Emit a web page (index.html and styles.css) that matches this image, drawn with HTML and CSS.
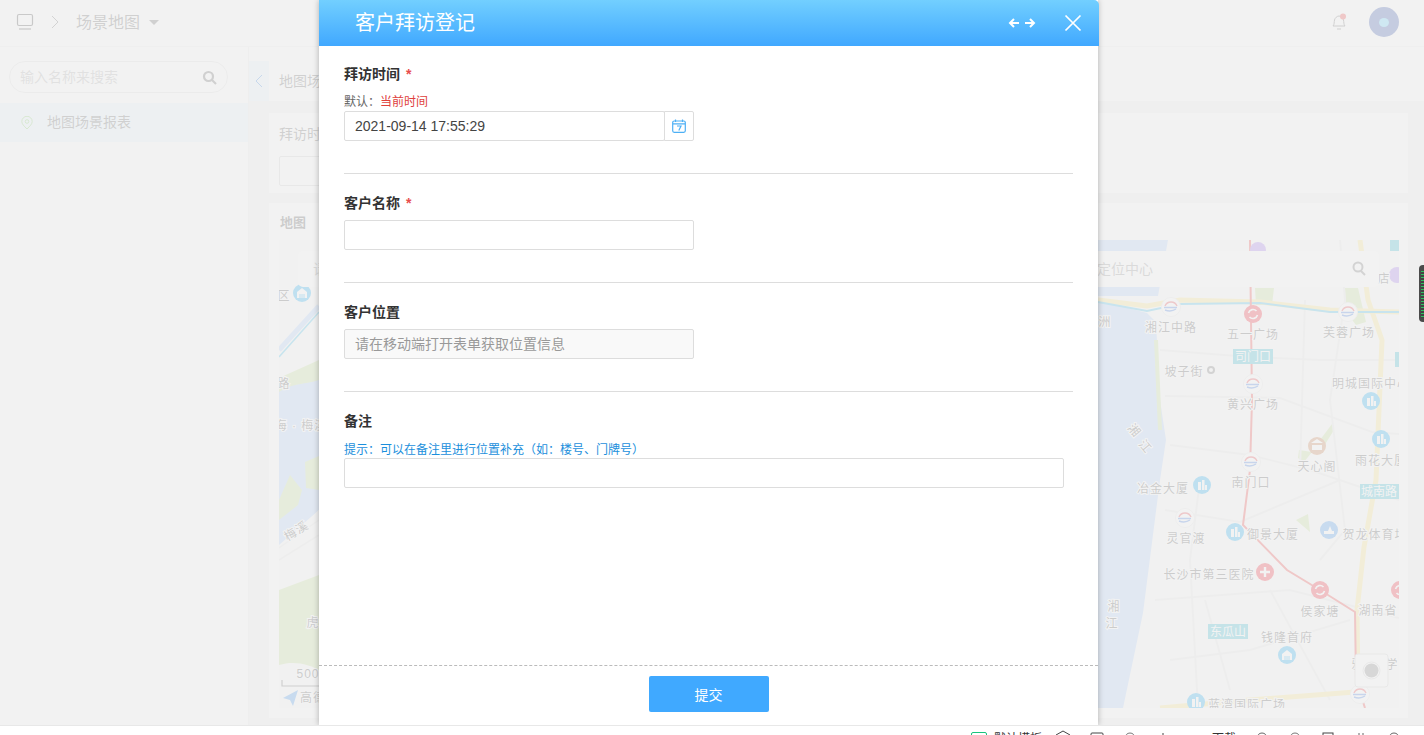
FILE: index.html
```html
<!DOCTYPE html>
<html lang="zh-CN">
<head>
    <meta charset="UTF-8">
    <title>客户拜访登记</title>
    <link rel="stylesheet" href="styles.css">
</head>
<body>
    <div class="app">
        <!-- top bar -->
        <header class="topbar">
            <svg class="ico-monitor" width="18" height="18" viewBox="0 0 18 18" fill="none" stroke="#333" stroke-width="1.2"><rect x="1.5" y="1.5" width="15" height="11" rx="1.5"/><path d="M3 16h12"/></svg>
            <svg class="ico-chevron" width="8" height="14" viewBox="0 0 8 14" fill="none" stroke="#666" stroke-width="1"><path d="M1 1l6 6-6 6"/></svg>
            <span class="app-name">场景地图</span>
            <span class="caret"></span>
            <div class="topbar-right">
                <svg width="16" height="18" viewBox="0 0 16 18" fill="none" stroke="#555" stroke-width="1"><path d="M2 13c1.500-1.500 1-4 1.500-6S6 3 8 3s4 2 4.500 4 0 4.500 1.500 6z"/><path d="M6 16h4"/><circle cx="12" cy="3.500" r="3" fill="#f02d2d" stroke="none"/></svg>
                <span class="avatar"><span class="avatar-dot"></span></span>
            </div>
        </header>

        <div class="workspace">
            <!-- sidebar -->
            <aside class="sidebar">
                <div class="side-search">
                    <span>输入名称来搜索</span>
                    <svg width="15" height="15" viewBox="0 0 15 15" fill="none" stroke="#555" stroke-width="2.200"><circle cx="6.500" cy="6.500" r="4.500"/><path d="M10 10l4 4"/></svg>
                </div>
                <div class="side-item">
                    <svg width="12" height="14" viewBox="0 0 12 14" fill="none" stroke="#7ccb5c" stroke-width="1"><path d="M6 13C3 10 .8 8 .8 5.500a5.200 5.200 0 0 1 10.400 0C11.200 8 9 10 6 13z"/><circle cx="6" cy="5.500" r="1.800"/></svg>
                    <span>地图场景报表</span>
                </div>
            </aside>

            <main class="main">
                <div class="tabbar">
                    <div class="collapse">
                        <svg width="8" height="14" viewBox="0 0 8 14" fill="none" stroke="#2b7de0" stroke-width="1"><path d="M7 1L1 7l6 6"/></svg>
                    </div>
                    <span class="tab-name">地图场景报表</span>
                </div>

                <section class="filter-card">
                    <div class="filter-label">拜访时间</div>
                    <div class="filter-input"></div>
                </section>

                <section class="map-card">
                    <div class="map-title">地图</div>
                    <svg class="map" width="1120" height="468" viewBox="279 240 1120 468">
                        <defs>
                            <g id="metro">
                                <circle r="9.500" fill="#fff" stroke="#e4e4e4"/>
                                <path d="M-6 -1a6.500 6.500 0 0 1 12 0" fill="none" stroke="#e8333a" stroke-width="1.400"/>
                                <path d="M-7 0.500h13M-6 3c4 1.500 8 1 11-1" fill="none" stroke="#2d6fe0" stroke-width="1.400"/>
                            </g>
                            <g id="tower">
                                <circle r="9" fill="#00a5f5"/>
                                <path d="M-4 5v-8h3v8zM0 5v-10h2.500v10zM3 5v-5h2v5z" fill="#fff"/>
                            </g>
                            <g id="house">
                                <circle r="9" fill="#00a5f5"/>
                                <path d="M-5 -1L0 -5l5 4v6h-10z" fill="#fff"/>
                                <path d="M-2 1v4M0 1v4M2 1v4" stroke="#00a5f5"/>
                            </g>
                            <g id="transfer">
                                <circle r="9" fill="#f50a1e"/>
                                <path d="M-4.500 -1a4.700 4.700 0 0 1 8 -2M4.500 1a4.700 4.700 0 0 1 -8 2" fill="none" stroke="#fff" stroke-width="1.600"/>
                            </g>
                        </defs>

                        <rect x="279" y="240" width="1120" height="468" fill="#fafaf8"/>

                        <!-- right side, water -->
                        <path d="M1098 240H1168L1158 296H1098z" fill="#aaccff"/>
                        <path d="M1098 300L1147 313L1156 322L1160 400L1166 440L1160 480L1143 613L1123 708H1098z" fill="#aaccff"/>
                        <path d="M1156 340L1160 430" stroke="#c3e191" stroke-width="4" fill="none"/>
                        <!-- parks -->
                        <path d="M1255 288L1274 288L1272 305H1256zM1345 288L1358 288L1366 322L1356 325L1346 312z" fill="#c3e191"/>
                        <path d="M1320 440L1332 424L1334 430L1324 446zM1299 450L1312 452L1304 462L1298 458zM1296 520L1308 514L1310 532z" fill="#c3e191"/>
                        <!-- grey streets -->
                        <g class="streets">
                            <path d="M1160 350L1250 357L1320 360L1400 360"/>
                            <path d="M1165 396L1280 398L1372 432L1399 434"/>
                            <path d="M1170 445L1250 455L1310 470L1399 500"/>
                            <path d="M1165 510L1240 522L1340 480"/>
                            <path d="M1155 600L1290 590L1399 618"/>
                            <path d="M1198 708L1190 560L1200 480"/>
                            <path d="M1305 300L1300 470"/>
                            <path d="M1170 660L1250 650L1350 620"/>
                            <path d="M1340 240L1345 300L1330 400L1345 530L1320 560"/>
                            <path d="M1205 600L1230 690"/>
                            <path d="M1270 590L1330 700"/>
                        </g>
                        <!-- big roads -->
                        <path class="road" d="M1360 240L1368 300L1382 340L1376 480L1364 547L1357 610L1358 690"/>
                        <path class="road" d="M1098 300L1147 306L1180 300L1260 302L1330 310L1399 312"/>
                        <path class="road" d="M1160 708L1250 700L1355 692"/>
                        <path class="metro-blue" d="M1098 302L1147 311L1180 304L1260 303L1330 312L1399 312"/>
                        <path class="metro-red" d="M1250 240L1252 400L1250 470L1243 525L1287 570L1320 590L1355 612L1356 680L1365 708"/>

                        <!-- stations and pois -->
                        <use href="#metro" x="1171" y="307"/>
                        <use href="#metro" x="1348" y="312"/>
                        <use href="#metro" x="1253" y="384"/>
                        <use href="#metro" x="1251" y="462"/>
                        <use href="#metro" x="1185" y="518"/>
                        <use href="#metro" x="1360" y="694"/>
                        <use href="#transfer" x="1253" y="314"/>
                        <use href="#transfer" x="1320" y="590"/>
                        <use href="#transfer" x="1400" y="590"/>
                        <use href="#tower" x="1371" y="401"/>
                        <use href="#tower" x="1381" y="439"/>
                        <use href="#tower" x="1202" y="485"/>
                        <use href="#tower" x="1235" y="532"/>
                        <use href="#tower" x="1196" y="702"/>
                        <use href="#house" x="1287" y="655"/>
                        <circle cx="1329" cy="530" r="9" fill="#2d8cf0"/>
                        <path d="M1324 534h10v-3h-2l-2-5-2 5h-4z" fill="#fff"/>
                        <circle cx="1317" cy="446" r="9" fill="#c8743c"/>
                        <path d="M1311 443l6-4 6 4zM1312 445h10v5h-10z" fill="#fff"/>
                        <circle cx="1265" cy="572" r="9" fill="#f50a1e"/>
                        <path d="M1265 567v10M1260 572h10" stroke="#fff" stroke-width="2.400"/>
                        <circle cx="1258" cy="250" r="8" fill="#9a6cf0"/>
                        <circle cx="1397" cy="275" r="8" fill="#9a6cf0"/>
                        <circle cx="1211" cy="370" r="3" fill="none" stroke="#666" stroke-width="2"/>

                        <g class="map-text">
                            <text x="1171" y="332">湘江中路</text>
                            <text x="1253" y="339">五一广场</text>
                            <text x="1349" y="337">芙蓉广场</text>
                            <text x="1184" y="376">坡子街</text>
                            <text x="1371" y="388">明城国际中心</text>
                            <text x="1253" y="409">黄兴广场</text>
                            <text x="1317" y="471">天心阁</text>
                            <text x="1381" y="465">雨花大厦</text>
                            <text x="1251" y="487">南门口</text>
                            <text x="1163" y="493">冶金大厦</text>
                            <text x="1186" y="543">灵官渡</text>
                            <text x="1273" y="539">御景大厦</text>
                            <text x="1375" y="539">贺龙体育场</text>
                            <text x="1209" y="579">长沙市第三医院</text>
                            <text x="1320" y="616">侯家塘</text>
                            <text x="1378" y="615">湖南省</text>
                            <text x="1287" y="642">钱隆首府</text>
                            <text x="1358" y="669">雅</text>
                            <text x="1392" y="669">学</text>
                            <text x="1247" y="709">蓝湾国际广场</text>
                            <text x="1384" y="283">店</text>
                            <text x="1105" y="326">洲</text>
                            <text x="1114" y="611">湘</text>
                            <text x="1112" y="628">江</text>
                            <text transform="rotate(50 1135 430)" x="1135" y="435">湘</text>
                            <text transform="rotate(50 1146 446)" x="1146" y="451">江</text>
                        </g>

                        <g class="map-tag">
                            <rect x="1233" y="349" width="40" height="15"/><text x="1253" y="361">司门口</text>
                            <rect x="1360" y="484" width="39" height="15"/><text x="1379" y="496">城南路</text>
                            <rect x="1208" y="624" width="40" height="15"/><text x="1228" y="636">东瓜山</text>
                            <rect x="1395" y="352" width="4" height="15"/>
                            <rect x="1390" y="240" width="9" height="11"/>
                        </g>

                        <!-- left side -->
                        <path d="M279 390C295 382 305 385 319 378V510L279 545z" fill="#aaccff"/>
                        <path d="M279 500L290 475L302 490L298 505L279 520zM305 462L319 456V490L306 488z" fill="#c3e191"/>
                        <path d="M279 378L319 360V380C305 385 295 382 279 392z" fill="#c3e191"/>
                        <path d="M279 548L319 510V575L279 590z" fill="#fafaf8"/>
                        <path d="M279 590L319 575V700H279z" fill="#c3e191"/>
                        <path d="M279 548L319 520M279 560L319 535" fill="none" stroke="#e6e6e6" stroke-width="1.500"/>
                        <path d="M279 350L319 306" fill="none" stroke="#aaccff" stroke-width="5"/>
                        <path d="M279 357L319 312" fill="none" stroke="#2db9eb" stroke-width="1.500"/>
                        <path d="M279 665C295 660 310 665 319 670V710H279z" fill="#fafaf8"/>
                        <use href="#house" x="302" y="293"/>
                        <g class="map-text">
                            <text x="284" y="300">区</text>
                            <text x="284" y="388">路</text>
                            <text x="301" y="430">海 · 梅溪</text>
                            <text transform="rotate(-32 296 530)" x="296" y="535">梅溪</text>
                            <text x="313" y="627">虎</text>
                            <text x="308" y="678">500</text>
                            <text x="313" y="702">高德</text>
                        </g>
                        <path d="M282 680v6h40" fill="none" stroke="#555" stroke-width="1.200"/>
                        <path d="M298 690L283 698L290 700L293 706z" fill="#2d8cf0"/>

                        <!-- search box over the map -->
                        <rect x="298" y="251" width="1081" height="36" rx="5" fill="#fefefe"/>
                        <text class="map-hint" x="313" y="274">请</text>
                        <text class="map-hint" x="1097" y="274">定位中心</text>
                        <g fill="none" stroke="#666" stroke-width="2"><circle cx="1358" cy="267" r="4.500"/><path d="M1361 271l4 4"/></g>

                        <!-- locate control -->
                        <rect x="1355" y="654" width="33" height="33" rx="3" fill="#fff" stroke="#ccc"/>
                        <circle cx="1371.500" cy="670.500" r="8.500" fill="#fff" stroke="#ccc"/>
                        <circle cx="1371.500" cy="670.500" r="7" fill="#777"/>
                    </svg>
                </section>
            </main>
        </div>

        <div class="mask"></div>

        <!-- dialog -->
        <div class="dialog">
            <div class="dialog-head">
                <span class="dialog-title">客户拜访登记</span>
                <svg class="ico-resize" width="28" height="12" viewBox="0 0 28 12" fill="none" stroke="#fff" stroke-width="2"><path d="M11 6H2M6 2L2 6l4 4M17 6h9M22 2l4 4-4 4"/></svg>
                <svg class="ico-close" width="18" height="18" viewBox="0 0 18 18" fill="none" stroke="#fff" stroke-width="1.700"><path d="M1.500 1.500l15 15M16.500 1.500l-15 15"/></svg>
            </div>

            <div class="dialog-body">
                <div class="field">
                    <div class="field-label">拜访时间 <em>*</em></div>
                    <div class="field-hint">默认：<span class="hint-red">当前时间</span></div>
                    <div class="input-wrap">
                        <div class="input">2021-09-14 17:55:29</div>
                        <div class="input-addon">
                            <svg width="14" height="14" viewBox="0 0 14 14" fill="none" stroke="#4db0f5" stroke-width="1.200"><rect x="0.700" y="2" width="12.600" height="11.300" rx="1.500"/><path d="M1 4.800h12M3.500 0.500v2.500M10.500 0.500v2.500M5 7h4L6.800 11.500"/></svg>
                        </div>
                    </div>
                </div>

                <div class="field">
                    <div class="field-label">客户名称 <em>*</em></div>
                    <div class="input-wrap">
                        <div class="input"></div>
                    </div>
                </div>

                <div class="field">
                    <div class="field-label">客户位置</div>
                    <div class="input-wrap">
                        <div class="input disabled">请在移动端打开表单获取位置信息</div>
                    </div>
                </div>

                <div class="field last">
                    <div class="field-label">备注</div>
                    <div class="field-hint hint-blue">提示：可以在备注里进行位置补充（如：楼号、门牌号）</div>
                    <div class="input-wrap wide">
                        <div class="input"></div>
                    </div>
                </div>
            </div>

            <div class="dialog-foot">
                <button class="btn-submit">提交</button>
            </div>
        </div>
    </div>

    <!-- clipped bar at the bottom edge -->
    <div class="bottom-strip">
        <span class="strip-check"></span>
        <span class="strip-text">默认模板</span>
        <svg class="strip-ico" width="16" height="16" viewBox="0 0 16 16" fill="none" stroke="#444"><path d="M1 5l7-4 7 4v8H1z"/></svg>
        <svg class="strip-ico" width="14" height="14" viewBox="0 0 14 14" fill="none" stroke="#444"><rect x="1" y="3" width="12" height="10" rx="1"/></svg>
        <svg class="strip-ico" width="14" height="14" viewBox="0 0 14 14" fill="none" stroke="#777"><circle cx="7" cy="8" r="5"/></svg>
        <svg class="strip-ico" width="14" height="14" viewBox="0 0 14 14" fill="none" stroke="#444"><path d="M7 3v10"/></svg>
        <span class="strip-text small">下载</span>
        <svg class="strip-ico" width="14" height="14" viewBox="0 0 14 14" fill="none" stroke="#666"><circle cx="7" cy="8" r="5"/></svg>
        <svg class="strip-ico" width="14" height="14" viewBox="0 0 14 14" fill="none" stroke="#777"><circle cx="7" cy="8" r="5"/></svg>
        <svg class="strip-ico" width="14" height="14" viewBox="0 0 14 14" fill="none" stroke="#444"><rect x="2" y="3" width="10" height="10"/></svg>
        <svg class="strip-ico" width="14" height="14" viewBox="0 0 14 14" fill="none" stroke="#666"><path d="M5 3v9M9 3v9"/></svg>
        <svg class="strip-ico" width="14" height="14" viewBox="0 0 14 14" fill="none" stroke="#666"><circle cx="7" cy="8" r="5"/></svg>
    </div>

    <!-- side widget -->
    <div class="side-widget"></div>
</body>
</html>
```

FILE: styles.css
```css
* {
    margin: 0;
    padding: 0;
    box-sizing: border-box;
}

html, body {
    width: 1424px;
    height: 735px;
    overflow: hidden;
}

body {
    font-family: "Liberation Sans", "Noto Sans CJK SC", sans-serif;
    font-size: 14px;
    color: #333;
    background: #fff;
    position: relative;
}

.app {
    position: relative;
    height: 725px;
    overflow: hidden;
    display: flex;
    flex-direction: column;
}

/* top bar */
.topbar {
    height: 47px;
    flex: none;
    display: flex;
    align-items: center;
    padding: 0 25px 2px 16px;
    background: #fff;
    border-bottom: 1px solid #f0f0f0;
}

.ico-chevron {
    margin-left: 17px;
}

.app-name {
    margin-left: 17px;
    margin-bottom: 2px;
    font-size: 16px;
    color: #555;
}

.caret {
    margin-left: 9px;
    margin-top: 0;
    border-left: 5px solid transparent;
    border-right: 5px solid transparent;
    border-top: 5px solid #555;
}

.topbar-right {
    margin-left: auto;
    display: flex;
    align-items: center;
    gap: 22px;
}

.avatar {
    width: 30px;
    height: 30px;
    border-radius: 50%;
    background: #1e41a5;
    display: flex;
    align-items: center;
    justify-content: center;
}

.avatar-dot {
    width: 10px;
    height: 9px;
    border-radius: 50%;
    background: #50cdff;
}

.workspace {
    flex: 1;
    display: flex;
    min-height: 0;
}

/* sidebar */
.sidebar {
    width: 249px;
    flex: none;
    background: #fff;
    border-right: 1px solid #e8e8e8;
    padding-top: 14px;
}

.side-search {
    width: 219px;
    height: 32px;
    margin-left: 9px;
    padding: 0 10px 0 10px;
    display: flex;
    align-items: center;
    justify-content: space-between;
    border: 1px solid #ddd;
    border-radius: 16px;
    color: #aaa;
}

.side-search span {
    margin-bottom: 3px;
}

.side-item {
    margin-top: 10px;
    height: 39px;
    padding-left: 21px;
    display: flex;
    align-items: center;
    gap: 14px;
    background: #e6f4ff;
    color: #555;
}

.side-item span {
    margin-bottom: 3px;
}

/* main area */
.main {
    flex: 1;
    min-width: 0;
    background: #f0f0f0;
}

.tabbar {
    height: 54px;
    padding-top: 14px;
    display: flex;
    background: #fff;
}

.collapse {
    width: 20px;
    background: #e6f4ff;
    display: flex;
    align-items: center;
    justify-content: center;
}

.tab-name {
    margin-left: 10px;
    line-height: 40px;
    color: #555;
}

.filter-card {
    margin: 12px 16px 0 20px;
    height: 80px;
    padding: 12px 10px;
    background: #fff;
}

.filter-label {
    line-height: 18px;
    color: #555;
}

.filter-input {
    margin-top: 13px;
    width: 300px;
    height: 30px;
    border: 1px solid #ccc;
    border-radius: 2px;
}

.map-card {
    margin: 10px 16px 0 20px;
    height: 515px;
    padding: 0 9px 10px 10px;
    background: #fff;
}

.map-title {
    height: 37px;
    line-height: 39px;
    padding-left: 1px;
    font-weight: bold;
    font-size: 13px;
    color: #444;
}

.map {
    display: block;
}

.streets path {
    fill: none;
    stroke: #e6e6e6;
    stroke-width: 2;
}

.road {
    fill: none;
    stroke: #ffe67d;
    stroke-width: 5;
}

.metro-blue {
    fill: none;
    stroke: #2db9eb;
    stroke-width: 2;
}

.metro-red {
    fill: none;
    stroke: #f02d2d;
    stroke-width: 2;
}

.map-text text {
    font-size: 12px;
    fill: #444;
    text-anchor: middle;
    letter-spacing: 1px;
    paint-order: stroke;
    stroke: #fff;
    stroke-width: 2px;
}

.map-tag rect {
    fill: #1eb4cd;
}

.map-tag text {
    font-size: 12px;
    fill: #fff;
    text-anchor: middle;
}

.map-hint {
    font-size: 14px;
    fill: #888;
}

/* mask over the page */
.mask {
    position: absolute;
    inset: 0;
    background: rgba(239, 239, 239, 0.8);
}

/* dialog */
.dialog {
    position: absolute;
    left: 319px;
    top: 0;
    width: 779px;
    height: 725px;
    display: flex;
    flex-direction: column;
    background: #fff;
    box-shadow: 0 0 6px rgba(0, 0, 0, 0.28);
}

.dialog-head {
    height: 46px;
    flex: none;
    margin-right: -1px;
    display: flex;
    align-items: center;
    padding: 0 17px 0 36px;
    background: linear-gradient(to bottom, #72cfff 0%, #40a8ff 100%);
    border-top-right-radius: 5px;
}

.dialog-title {
    margin-bottom: 3px;
    font-size: 20px;
    color: #fff;
}

.ico-resize {
    margin-left: auto;
}

.ico-close {
    margin-left: 28px;
}

.dialog-body {
    flex: 1;
    padding: 18px 25px 0;
}

.field {
    padding-bottom: 32px;
    margin-bottom: 19px;
    border-bottom: 1px solid #ddd;
}

.field.last {
    border-bottom: none;
    padding-bottom: 0;
    margin-bottom: 0;
}

.field-label {
    height: 20px;
    line-height: 20px;
    margin-bottom: 7px;
    font-weight: bold;
    color: #333;
}

.field-label em {
    color: #e84c4c;
    font-style: normal;
    margin-left: 2px;
}

.field-hint {
    height: 20px;
    line-height: 22px;
    font-size: 12px;
    color: #666;
}

.hint-red {
    color: #e0403c;
}

.field-hint.hint-blue {
    line-height: 24px;
    color: #1b8fdc;
}

.input-wrap {
    width: 350px;
    height: 30px;
    display: flex;
}

.input-wrap.wide {
    width: 720px;
}

.input {
    flex: 1;
    height: 30px;
    line-height: 28px;
    padding: 0 10px;
    border: 1px solid #ddd;
    border-radius: 2px;
    color: #444;
}

.input.disabled {
    background: #f9f9f9;
    color: #999;
}

.input-addon {
    width: 30px;
    height: 30px;
    margin-left: -1px;
    display: flex;
    align-items: center;
    justify-content: center;
    border: 1px solid #ddd;
    border-radius: 0 2px 2px 0;
}

.dialog-foot {
    height: 60px;
    flex: none;
    padding-top: 10px;
    display: flex;
    justify-content: center;
    border-top: 1px dashed #bbb;
}

.btn-submit {
    width: 120px;
    height: 36px;
    border: none;
    border-radius: 2px;
    background: #40a9ff;
    color: #fff;
    font-family: inherit;
    font-size: 14px;
}

/* bottom strip, the items are cut off by the window */
.bottom-strip {
    height: 10px;
    overflow: hidden;
    display: flex;
    align-items: flex-start;
    gap: 19px;
    padding: 6px 0 0 971px;
    background: #fff;
    border-top: 1px solid #e8e8e8;
}

.strip-check {
    width: 16px;
    height: 14px;
    flex: none;
    margin-right: -12px;
    border: 1px solid #19c37d;
    border-radius: 2px;
}

.strip-text {
    font-size: 12px;
    line-height: 14px;
    white-space: nowrap;
    margin-right: -6px;
}

.strip-text.small {
    margin: 0 0 0 23px;
}

.strip-ico {
    flex: none;
    margin-top: -2px;
}

.side-widget {
    position: absolute;
    left: 1419px;
    top: 265px;
    width: 5px;
    height: 57px;
    border-radius: 4px 0 0 4px;
    background: repeating-linear-gradient(to bottom, #2fbf5f 0, #2fbf5f 1px, #444 1px, #444 3px);
    border-style: solid;
    border-color: #4a4a4a;
    border-width: 6px 0 4px 2px;
}
```
